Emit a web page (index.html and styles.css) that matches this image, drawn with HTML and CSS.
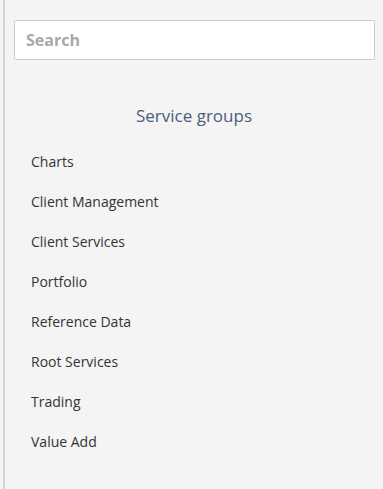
FILE: index.html
```html
<!DOCTYPE html>
<html>
<head>
<meta charset="utf-8">
<link rel="stylesheet" href="styles.css">
</head>
<body>
<div class="panel">
  <div class="search-wrap">
    <input class="search" type="text" placeholder="Search">
  </div>
  <h2 class="heading">Service groups</h2>
  <ul class="groups">
    <li>Charts</li>
    <li>Client Management</li>
    <li>Client Services</li>
    <li>Portfolio</li>
    <li>Reference Data</li>
    <li>Root Services</li>
    <li>Trading</li>
    <li>Value Add</li>
  </ul>
</div>
</body>
</html>
```
FILE: styles.css
```css
html, body {
  margin: 0;
  padding: 0;
  background: #f4f4f4;
  height: 100%;
}
body {
  font-family: "Open Sans", "Liberation Sans", sans-serif;
  padding-left: 3px;
  box-sizing: border-box;
}
.panel {
  border-left: 2px solid #d6d6d6;
  min-height: 100%;
  box-sizing: border-box;
  padding-top: 20px;
}
.search-wrap {
  padding: 0 8px 0 9px;
}
.search {
  display: block;
  width: 100%;
  box-sizing: border-box;
  height: 40px;
  border: 1px solid #cccccc;
  border-radius: 2px;
  background: #fff;
  padding: 0 11px;
  font-family: "Open Sans", "Liberation Sans", sans-serif;
  font-size: 16px;
  font-weight: 700;
  color: #555;
  outline: none;
}
.search::placeholder {
  color: #a9a9a9;
  font-weight: 700;
}
.heading {
  margin: 44px 0 0 0;
  text-align: center;
  font-size: 17px;
  font-weight: 400;
  line-height: 24px;
  color: #4b5d78;
}
.groups {
  list-style: none;
  margin: 14px 0 0 0;
  padding: 0 0 0 26px;
}
.groups li {
  font-size: 14px;
  line-height: 40px;
  color: #333;
}
```
